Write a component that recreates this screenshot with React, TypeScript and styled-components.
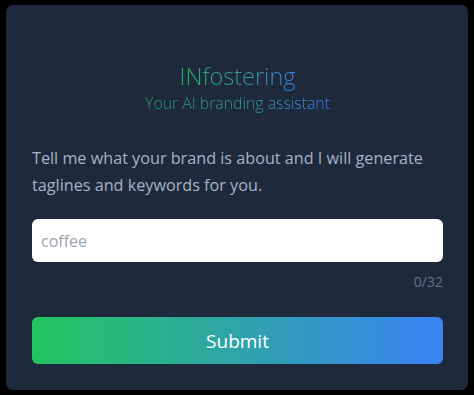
import React from "react";
import styled, { createGlobalStyle } from "styled-components";

const Global = createGlobalStyle`
  html, body { margin: 0; padding: 0; background: #000; }
  body { font-family: "Open Sans", "Noto Sans", sans-serif; }
  * { box-sizing: border-box; }
`;

const Page = styled.div`
  width: 474px;
  height: 395px;
  padding: 5px 6px 5px 6px;
  background: #000;
`;

const Card = styled.div`
  height: 385px;
  background: #1e293b;
  border-radius: 7px;
  padding: 56px 25px 0 26px;
  display: flex;
  flex-direction: column;
`;

const Header = styled.div`
  display: flex;
  flex-direction: column;
  align-items: center;
`;

const Title = styled.h1`
  margin: 0;
  font-size: 23.5px;
  font-weight: 300;
  line-height: 30px;
  background: linear-gradient(90deg, #22b35a, #3b7fd6);
  -webkit-background-clip: text;
  background-clip: text;
  color: transparent;
`;

const Subtitle = styled.p`
  margin: 2px 0 0 0;
  font-size: 15.8px;
  font-weight: 300;
  line-height: 20px;
  background: linear-gradient(90deg, #22a06b 0%, #2a9d8f 50%, #3b82f6 100%);
  -webkit-background-clip: text;
  background-clip: text;
  color: transparent;
`;

const Intro = styled.p`
  margin: 32px 0 0 0;
  font-size: 16.2px;
  line-height: 27px;
  color: #a5b4c8;
`;

const Input = styled.input`
  margin-top: 20px;
  width: 100%;
  height: 43px;
  border: none;
  border-radius: 6px;
  background: #fff;
  padding: 0 9px;
  font-family: inherit;
  font-size: 16px;
  color: #111;
  outline: none;
  &::placeholder { color: #9ca3af; }
`;

const Counter = styled.div`
  margin-top: 11px;
  text-align: right;
  font-size: 14px;
  line-height: 18px;
  color: #64748b;
`;

const Button = styled.button`
  margin-top: 26px;
  width: 100%;
  height: 47px;
  border: none;
  border-radius: 6px;
  background: linear-gradient(90deg, #22c55e, #3b82f6);
  color: #fff;
  font-family: inherit;
  font-size: 19px;
  font-weight: 500;
  cursor: pointer;
`;

export default function App() {
  return (
    <Page>
      <Global />
      <Card>
        <Header>
          <Title>INfostering</Title>
          <Subtitle>Your AI branding assistant</Subtitle>
        </Header>
        <Intro>
          Tell me what your brand is about and I will generate taglines and keywords for you.
        </Intro>
        <Input placeholder="coffee" />
        <Counter>0/32</Counter>
        <Button>Submit</Button>
      </Card>
    </Page>
  );
}
